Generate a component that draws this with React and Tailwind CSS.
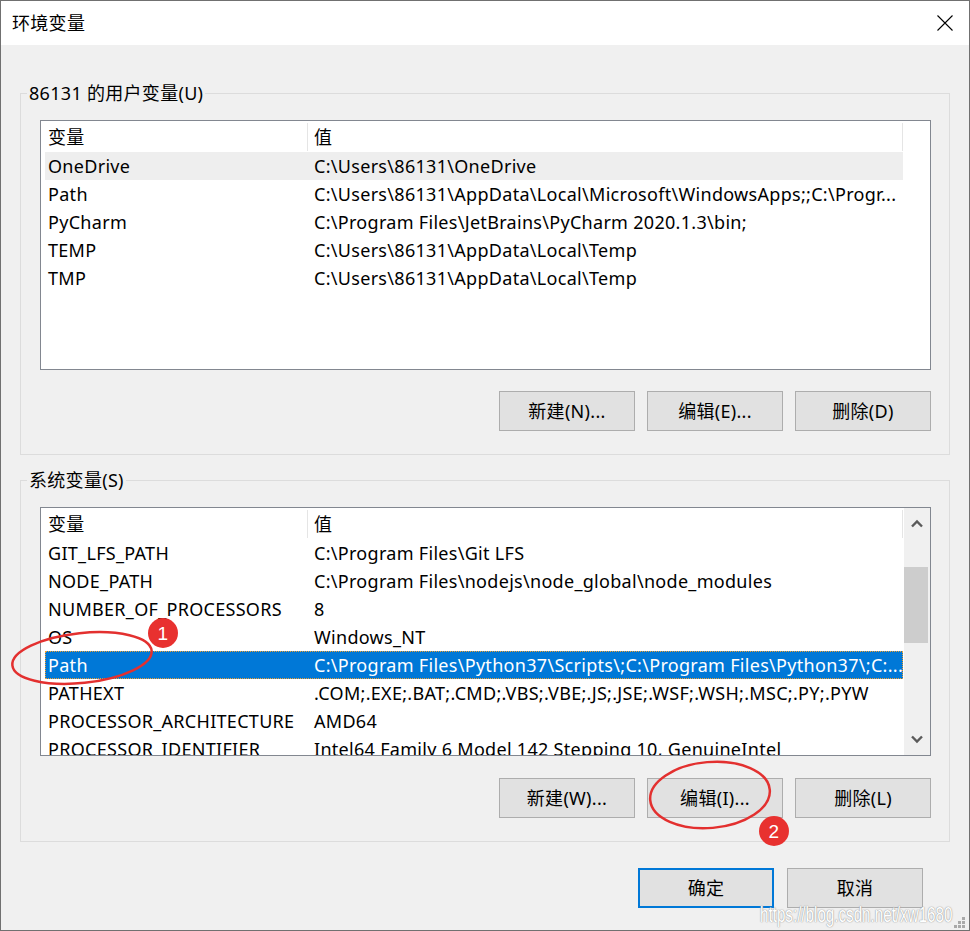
import React from "react";

const userVars = [
  ["OneDrive", String.raw`C:\Users\86131\OneDrive`],
  ["Path", String.raw`C:\Users\86131\AppData\Local\Microsoft\WindowsApps;;C:\Progr...`],
  ["PyCharm", String.raw`C:\Program Files\JetBrains\PyCharm 2020.1.3\bin;`],
  ["TEMP", String.raw`C:\Users\86131\AppData\Local\Temp`],
  ["TMP", String.raw`C:\Users\86131\AppData\Local\Temp`],
];

const sysVars = [
  ["GIT_LFS_PATH", String.raw`C:\Program Files\Git LFS`],
  ["NODE_PATH", String.raw`C:\Program Files\nodejs\node_global\node_modules`],
  ["NUMBER_OF_PROCESSORS", "8"],
  ["OS", "Windows_NT"],
  ["Path", String.raw`C:\Program Files\Python37\Scripts\;C:\Program Files\Python37\;C:...`],
  ["PATHEXT", ".COM;.EXE;.BAT;.CMD;.VBS;.VBE;.JS;.JSE;.WSF;.WSH;.MSC;.PY;.PYW"],
  ["PROCESSOR_ARCHITECTURE", "AMD64"],
  ["PROCESSOR_IDENTIFIER", "Intel64 Family 6 Model 142 Stepping 10, GenuineIntel"],
];

function Header() {
  return (
    <div className="flex h-[31px] w-[858px] shrink-0 items-center">
      <div className="flex h-[28px] w-[263px] items-center border-r border-[#e5e5e5] pl-[3px]">变量</div>
      <div className="flex h-[28px] flex-1 items-center border-r border-[#e5e5e5] pl-[6px]">值</div>
    </div>
  );
}

function Row({ name, value, hover, selected }) {
  let look = "";
  if (selected) look = "bg-[#0078d7] text-white outline-1 outline-dotted outline-[#f0a030] -outline-offset-1";
  else if (hover) look = "bg-[#eeeeee]";
  return (
    <div className={`flex h-[28px] w-[858px] shrink-0 items-center whitespace-nowrap ${look}`}>
      <div className="w-[262px] overflow-hidden pl-[3px]">{name}</div>
      <div className="flex-1 overflow-hidden pl-[7px]">{value}</div>
    </div>
  );
}

function Chevron({ up }) {
  return (
    <svg width="14" height="9" viewBox="0 0 14 9">
      <polyline
        points={up ? "2,7.5 7,2.5 12,7.5" : "2,1.5 7,6.5 12,1.5"}
        fill="none"
        stroke="#5a5a5a"
        strokeWidth="2.4"
      />
    </svg>
  );
}

function Scrollbar() {
  return (
    <div className="flex w-[26px] shrink-0 flex-col bg-[#f0f0f0]">
      <div className="flex h-[31px] items-center justify-center">
        <Chevron up />
      </div>
      <div className="flex-1">
        <div className="mt-[28px] h-[76px] w-[24px] bg-[#cdcdcd]" />
      </div>
      <div className="flex h-[31px] items-center justify-center">
        <Chevron />
      </div>
    </div>
  );
}

function VarList({ rows, hoverRow, selectedRow, scroll, tall }) {
  return (
    <div className={`flex w-[891px] overflow-hidden border border-[#828790] bg-white ${tall ? "h-[250px]" : "h-[249px]"}`}>
      <div className="flex min-w-0 flex-1 flex-col pl-[4px]">
        <Header />
        {rows.map(([n, v], i) => (
          <Row key={n} name={n} value={v} hover={i === hoverRow} selected={i === selectedRow} />
        ))}
      </div>
      {scroll && <Scrollbar />}
    </div>
  );
}

function Btn({ children, primary }) {
  return (
    <button
      className={`h-[40px] w-[136px] bg-[#e1e1e1] text-[18px] leading-[26px] text-black ${
        primary ? "border-2 border-[#0078d7]" : "border border-[#adadad]"
      }`}
    >
      {children}
    </button>
  );
}

function Group({ title, children }) {
  return (
    <fieldset className="ml-[19px] w-[930px] border border-[#dcdcdc]">
      <legend className="ml-[6px] px-[2px] leading-[26px]">{title}</legend>
      <div className="pb-[23px] pl-[19px] pr-[18px]">{children}</div>
    </fieldset>
  );
}

export default function App() {
  return (
    <div className="relative h-[931px] w-[970px] overflow-hidden font-['Noto_Sans','Noto_Sans_CJK_SC',sans-serif] text-[18px] leading-[26px] tracking-[0.3px] text-black">
      <div className="flex h-full w-full flex-col border border-[#707070] bg-[#f0f0f0]">
        {/* title bar */}
        <div className="flex h-[44px] shrink-0 items-center justify-between bg-white pl-[11px] pr-[16px]">
          <span>环境变量</span>
          <svg width="16" height="16" viewBox="0 0 16 16">
            <path d="M0.5 0.5 L15.5 15.5 M15.5 0.5 L0.5 15.5" stroke="#000" strokeWidth="1.1" />
          </svg>
        </div>

        <div className="mt-[35px]">
          <Group title="86131 的用户变量(U)">
            <div className="mt-[14px]">
              <VarList rows={userVars} hoverRow={0} tall />
            </div>
            <div className="mt-[21px] flex justify-end gap-[12px]">
              <Btn>新建(N)...</Btn>
              <Btn>编辑(E)...</Btn>
              <Btn>删除(D)</Btn>
            </div>
          </Group>
        </div>

        <div className="mt-[12px]">
          <Group title="系统变量(S)">
            <div className="mt-[14px]">
              <VarList rows={sysVars} selectedRow={4} scroll />
            </div>
            <div className="mt-[22px] flex justify-end gap-[12px]">
              <Btn>新建(W)...</Btn>
              <Btn>编辑(I)...</Btn>
              <Btn>删除(L)</Btn>
            </div>
          </Group>
        </div>

        <div className="mt-[26px] flex justify-end gap-[13px] pr-[46px]">
          <Btn primary>确定</Btn>
          <Btn>取消</Btn>
        </div>
      </div>

      {/* screenshot annotations */}
      <svg className="pointer-events-none absolute left-0 top-0" width="970" height="931" viewBox="0 0 970 931">
        <ellipse cx="82" cy="658" rx="70" ry="25" transform="rotate(-6 82 658)" fill="none" stroke="#e3302f" strokeWidth="2.5" />
        <circle cx="163" cy="633" r="15" fill="#e8312f" />
        <text x="163" y="640" textAnchor="middle" fill="#fff" fontSize="19" fontFamily="Liberation Sans, sans-serif">1</text>
        <ellipse cx="710" cy="795" rx="60" ry="33" transform="rotate(-5 710 795)" fill="none" stroke="#e3302f" strokeWidth="2.5" />
        <circle cx="774" cy="831" r="15" fill="#e8312f" />
        <text x="774" y="838" textAnchor="middle" fill="#fff" fontSize="19" fontFamily="Liberation Sans, sans-serif">2</text>
        <g fill="#a9a9a9">
          <rect x="962" y="917" width="3" height="3" />
          <rect x="958" y="921" width="3" height="3" />
          <rect x="962" y="921" width="3" height="3" />
          <rect x="954" y="925" width="3" height="3" />
          <rect x="958" y="925" width="3" height="3" />
          <rect x="962" y="925" width="3" height="3" />
        </g>
      </svg>
      <div className="pointer-events-none absolute left-[760px] top-[903px] origin-left scale-x-[0.69] whitespace-nowrap font-['Liberation_Sans',sans-serif] text-[22px] leading-[24px] tracking-normal text-white [text-shadow:0_0_1px_#8a8a8a,0_0_2px_#b0b0b0]">
        https://blog.csdn.net/xw1680
      </div>
    </div>
  );
}
